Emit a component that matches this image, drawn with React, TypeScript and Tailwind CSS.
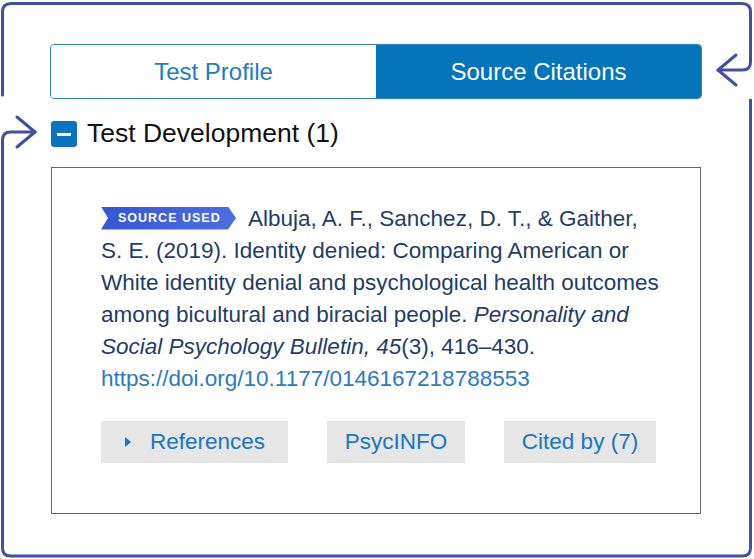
import React from "react";

function Frame() {
  return (
    <svg className="absolute inset-0 pointer-events-none" width="754" height="559" viewBox="0 0 754 559" fill="none">
      <g stroke="#3d50a5" strokeWidth="3" strokeLinecap="round" strokeLinejoin="round">
        <path d="M2.5 95 V12 Q2.5 3.5 11 3.5 H742 Q750.5 3.5 750.5 12 V62 Q750.5 70 742.5 70 H718" />
        <path d="M736 55 L718 70 L736 85" />
        <path d="M750.5 100 V548 Q750.5 556 742.5 556 H10.5 Q2.5 556 2.5 548 V140 Q2.5 132 10.5 132 H35" />
        <path d="M17 117 L35 132 L17 147" />
      </g>
    </svg>
  );
}

function SourceBadge() {
  return (
    <span className="inline-flex items-center align-middle mr-3 -mt-1 h-[23px] w-[135px] pl-[17px] bg-gradient-to-r from-[#3656d4] to-[#4d6ee2] [clip-path:polygon(0_0,calc(100%-8px)_0,100%_50%,calc(100%-8px)_100%,0_100%,7px_50%)] text-white text-[12.5px] font-bold tracking-[1px] leading-none">
      SOURCE USED
    </span>
  );
}

export default function App() {
  const font = { fontFamily: '"Liberation Sans", Arial, sans-serif' };
  return (
    <div className="relative w-[754px] h-[559px] bg-white overflow-hidden" style={font}>
      <Frame />
      <div className="pt-[44px] pl-[50px]">
        <div className="flex w-[652px] h-[55px] rounded-[4px] border border-[#2a84cb] overflow-hidden">
          <button className="flex-1 flex items-center justify-center bg-white text-[#1a7dc6] text-[24px]">Test Profile</button>
          <button className="flex-1 flex items-center justify-center bg-[#0474bb] text-white text-[24px]">Source Citations</button>
        </div>

        <div className="flex items-center mt-[22px] h-[26px]">
          <span className="w-[26px] h-[26px] rounded-[3px] bg-[#0a74c0] flex items-center justify-center ml-[1px]">
            <span className="w-[14px] h-[3px] bg-white" />
          </span>
          <span className="ml-[10px] text-[26.5px] text-[#111]">Test Development (1)</span>
        </div>

        <div className="mt-[20px] ml-[1px] w-[650px] h-[347px] border border-[#666] pt-[35px] pl-[49px]">
          <p className="text-[22.5px] leading-[32px] text-[#1f3d66] whitespace-nowrap">
            <SourceBadge />
            Albuja, A. F., Sanchez, D. T., &amp; Gaither,<br />
            S. E. (2019). Identity denied: Comparing American or<br />
            White identity denial and psychological health outcomes<br />
            among bicultural and biracial people. <i>Personality and</i><br />
            <i>Social Psychology Bulletin, 45</i>(3), 416–430.<br />
            <a className="text-[#2b7bc0]">https://doi.org/10.1177/0146167218788553</a>
          </p>

          <div className="flex gap-[39px] mt-[26px] text-[22.5px] text-[#1877c0]">
            <button className="flex items-center w-[187px] h-[42px] bg-[#e6e6e6] pl-[24px]">
              <svg width="6" height="10" viewBox="0 0 6 10" className="mr-[19px]">
                <path d="M0 0 L6 5 L0 10 Z" fill="#1877c0" />
              </svg>
              References
            </button>
            <button className="flex items-center justify-center w-[138px] h-[42px] bg-[#e6e6e6]">PsycINFO</button>
            <button className="flex items-center justify-center w-[152px] h-[42px] bg-[#e6e6e6]">Cited by (7)</button>
          </div>
        </div>
      </div>
    </div>
  );
}
